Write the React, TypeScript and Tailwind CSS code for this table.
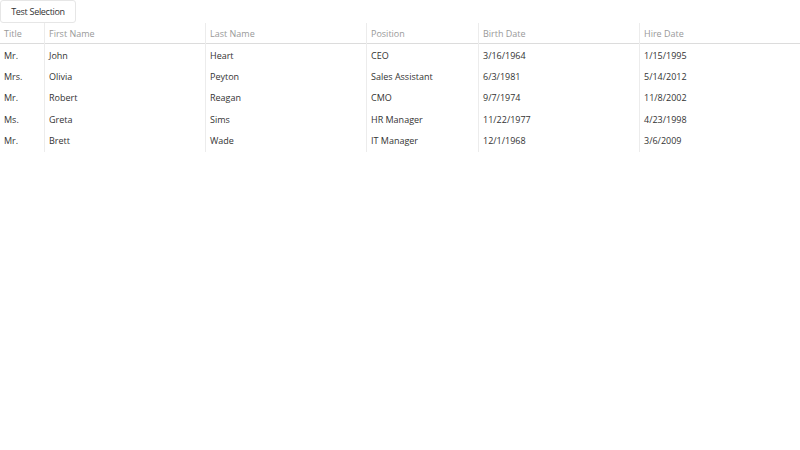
import React from "react";

const cols = [
  { key: "title", label: "Title", w: "w-[44px]" },
  { key: "first", label: "First Name", w: "w-[161px]" },
  { key: "last", label: "Last Name", w: "w-[161px]" },
  { key: "pos", label: "Position", w: "w-[112px]" },
  { key: "birth", label: "Birth Date", w: "w-[161px]" },
  { key: "hire", label: "Hire Date", w: "flex-1" },
];

const rows = [
  ["Mr.", "John", "Heart", "CEO", "3/16/1964", "1/15/1995"],
  ["Mrs.", "Olivia", "Peyton", "Sales Assistant", "6/3/1981", "5/14/2012"],
  ["Mr.", "Robert", "Reagan", "CMO", "9/7/1974", "11/8/2002"],
  ["Ms.", "Greta", "Sims", "HR Manager", "11/22/1977", "4/23/1998"],
  ["Mr.", "Brett", "Wade", "IT Manager", "12/1/1968", "3/6/2009"],
];

export default function App() {
  return (
    <div
      className="w-[800px] h-[450px] bg-white text-[9px] text-[#333]"
      style={{ fontFamily: '"Open Sans", "Noto Sans", sans-serif' }}
    >
      <button className="h-[23px] w-[76px] border border-[#e6e6e6] rounded-[3px] bg-white text-[#333] text-[9px] tracking-[-0.3px] flex items-center justify-center">
        Test Selection
      </button>
      <div className="flex">
        {cols.map((c, ci) => (
          <div
            key={c.key}
            className={`${c.w} ${ci > 0 ? "border-l border-[#ececec]" : ""}`}
          >
            <div className="h-[21px] pt-[1px] border-b border-[#dcdcdc] flex items-center px-[4px] text-[#999]">
              {c.label}
            </div>
            <div className="pt-[1px] pb-[2px]">
              {rows.map((r, ri) => (
                <div key={ri} className="h-[21.1px] pt-[1px] flex items-center px-[4px]">
                  {r[ci]}
                </div>
              ))}
            </div>
          </div>
        ))}
      </div>
    </div>
  );
}
